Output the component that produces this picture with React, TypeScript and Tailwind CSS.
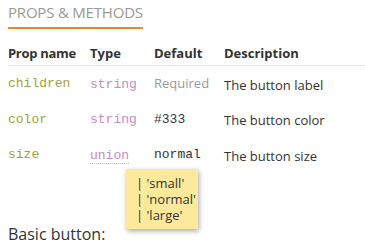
import React from 'react';

const sans = "font-['Open_Sans','Noto_Sans',sans-serif]";
const mono = "font-['Liberation_Mono','DejaVu_Sans_Mono',monospace]";

type Row = { name: string; type: string; def: string; defMono: boolean; desc: string; tip?: boolean };

const rows: Row[] = [
  { name: 'children', type: 'string', def: 'Required', defMono: false, desc: 'The button label' },
  { name: 'color', type: 'string', def: '#333', defMono: true, desc: 'The button color' },
  { name: 'size', type: 'union', def: 'normal', defMono: true, desc: 'The button size', tip: true },
];

export default function App() {
  return (
    <div className={`w-[365px] h-[247px] overflow-hidden bg-white pl-2 ${sans}`}>
      <div className="inline-block">
        <h3 className="text-[15px] leading-[17px] text-[#999] tracking-[-0.2px] pb-[6px] border-b-2 border-[#e98a2a]">
          PROPS &amp; METHODS
        </h3>
      </div>

      <div className="mt-[13px] flex h-[24px] items-center border-b border-[#e5e5e5] text-[13px] font-bold text-[#333]">
        <div className="w-[82px] tracking-[-0.3px]">Prop name</div>
        <div className="w-[64px]">Type</div>
        <div className="w-[70px]">Default</div>
        <div>Description</div>
      </div>

      {rows.map((r) => (
        <div key={r.name} className="relative flex h-[35.5px] items-center text-[13px]">
          <div className={`w-[82px] ${mono} text-[#a3a13a]`}>{r.name}</div>
          <div className="relative w-[64px]">
            <span className={`${mono} text-[#c58cc1] ${r.tip ? 'border-b border-dotted border-[#c9a6c8]' : ''}`}>
              {r.type}
            </span>
            {r.tip && (
              <div className="absolute left-[36px] top-[24px] z-10 w-[72px] whitespace-nowrap bg-[#fce99c] px-[10px] py-[6px] text-[13px] leading-[16px] text-[#333] shadow-[1px_2px_5px_rgba(0,0,0,0.35)]">
                <div>| 'small'</div>
                <div>| 'normal'</div>
                <div>| 'large'</div>
              </div>
            )}
          </div>
          <div className={`w-[70px] ${r.defMono ? `${mono} text-[#333]` : 'text-[#999]'}`}>{r.def}</div>
          <div className="text-[#333] pt-[3px]">{r.desc}</div>
        </div>
      ))}

      <div className="mt-[50px] text-[16px] leading-[22px] text-[#333]">Basic button:</div>
    </div>
  );
}
